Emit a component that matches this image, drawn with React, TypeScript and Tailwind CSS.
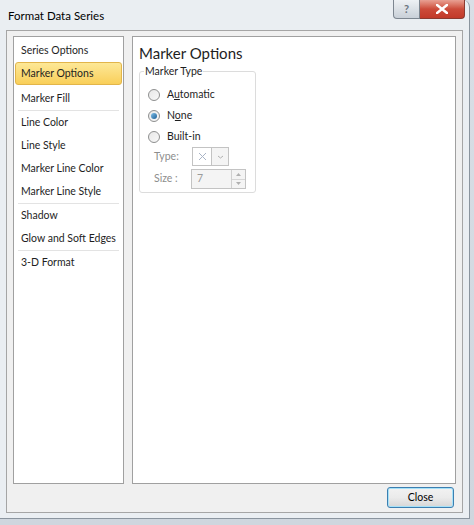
import React from "react";

const font = { fontFamily: 'Lato, "Noto Sans", sans-serif' };

type Item = { label: string; selected?: boolean; sepAfter?: boolean };

const items: Item[] = [
  { label: "Series Options" },
  { label: "Marker Options", selected: true },
  { label: "Marker Fill", sepAfter: true },
  { label: "Line Color" },
  { label: "Line Style" },
  { label: "Marker Line Color" },
  { label: "Marker Line Style", sepAfter: true },
  { label: "Shadow" },
  { label: "Glow and Soft Edges", sepAfter: true },
  { label: "3-D Format" },
];

function Radio({ checked }: { checked?: boolean }) {
  return (
    <span className="w-[12px] h-[12px] rounded-full border border-[#8e8f8f] bg-gradient-to-br from-[#e8e8e8] to-[#f8f8f8] flex items-center justify-center shrink-0">
      {checked && (
        <span className="w-[6px] h-[6px] rounded-full bg-gradient-to-br from-[#7fc0ea] to-[#1b5f95]" />
      )}
    </span>
  );
}

export default function App() {
  return (
    <div
      className="w-[474px] h-[525px] overflow-hidden bg-gradient-to-b from-[#d9dfe6] to-[#cfd6de] text-[#1e1e1e]"
      style={font}
    >
      <div className="w-[470px] h-[519px] bg-[#eaeef2] border-r border-b border-[#8a949e] rounded-tr-[7px] flex flex-col">
        {/* title bar */}
        <div className="h-[30px] flex items-start shrink-0">
          <div className="pl-[8px] pt-[7px] text-[11.5px] text-black">Format Data Series</div>
          <div className="ml-auto mr-[4px] flex">
            <div className="w-[27px] h-[19px] border border-[#7d8690] border-t-0 rounded-bl-[4px] bg-gradient-to-b from-[#eef1f4] to-[#c9d0d8] flex items-center justify-center text-[11px] font-bold text-[#6a7480]">
              ?
            </div>
            <div className="w-[45px] h-[19px] border border-[#8b3a30] border-t-0 border-l-0 rounded-br-[4px] bg-gradient-to-b from-[#e8a093] via-[#cc4b3a] to-[#c23a2a] flex items-center justify-center">
              <svg width="12" height="10" viewBox="0 0 12 10">
                <path d="M1 1 L11 9 M11 1 L1 9" stroke="#fff" strokeWidth="2.6" strokeLinecap="square" />
              </svg>
            </div>
          </div>
        </div>

        {/* client */}
        <div className="mx-[6px] h-[483px] border border-[#a5a5a5] bg-[#f0f0f0] flex flex-col px-[6px] pt-[5px]">
          <div className="flex gap-[8px] h-[448px]">
            {/* nav list */}
            <div className="w-[111px] border border-[#a0a0a0] bg-white pt-[2px] px-[1px] text-[10.5px] whitespace-nowrap">
              {items.map((it) => (
                <div key={it.label}>
                  <div
                    className={
                      it.selected
                        ? "h-[23px] flex items-center pl-[5px] rounded-[3px] border border-[#e2b54a] bg-gradient-to-b from-[#fde896] to-[#f9cf58] mb-[2px]"
                        : "h-[23px] flex items-center pl-[6px]"
                    }
                  >
                    {it.label}
                  </div>
                  {it.sepAfter && <div className="h-[1px] bg-[#e3e3e3] mx-[3px]" />}
                </div>
              ))}
            </div>

            {/* content */}
            <div className="flex-1 border border-[#a0a0a0] bg-white pl-[6px] pt-[6px]">
              <div className="text-[15px] leading-[20px] text-[#1e1e1e]">Marker Options</div>
              <div className="relative mt-[8px] w-[117px] h-[122px] border border-[#dcdcdc] rounded-[3px] text-[10.5px]">
                <div className="absolute -top-[8px] left-[4px] bg-white px-[1px] leading-[14px]">Marker Type</div>
                <div className="pt-[16px] pl-[8px] flex flex-col gap-[7px]">
                  <div className="flex items-center gap-[7px] h-[14px]">
                    <Radio />
                    <span>
                      A<span className="underline">u</span>tomatic
                    </span>
                  </div>
                  <div className="flex items-center gap-[7px] h-[14px]">
                    <Radio checked />
                    <span>
                      N<span className="underline">o</span>ne
                    </span>
                  </div>
                  <div className="flex items-center gap-[7px] h-[14px]">
                    <Radio />
                    <span>Built-in</span>
                  </div>
                </div>
                <div className="pl-[14px] mt-[3px] flex flex-col gap-[3px] text-[#8d8d8d]">
                  <div className="flex items-center h-[19px]">
                    <span className="w-[38px]">Type:</span>
                    <div className="flex h-[19px] border border-[#c3c3c3]">
                      <div className="w-[18px] flex items-center justify-center">
                        <svg width="9" height="9" viewBox="0 0 9 9">
                          <path d="M1 1 L8 8 M8 1 L1 8" stroke="#a9b4c6" strokeWidth="1" />
                        </svg>
                      </div>
                      <div className="w-[17px] border-l border-[#c3c3c3] bg-[#f4f4f4] flex items-center justify-center">
                        <svg width="7" height="4" viewBox="0 0 7 4">
                          <path d="M1 1 L3.5 3 L6 1" stroke="#b0b0b0" fill="none" />
                        </svg>
                      </div>
                    </div>
                  </div>
                  <div className="flex items-center h-[20px]">
                    <span className="w-[37px]">Size :</span>
                    <div className="flex h-[20px] w-[55px] border border-[#c3c3c3] bg-[#f4f4f4]">
                      <div className="flex-1 pl-[5px] flex items-center text-[#9a9a9a]">7</div>
                      <div className="w-[14px] border-l border-[#d0d0d0] flex flex-col">
                        <div className="flex-1 flex items-center justify-center border-b border-[#d6d6d6]">
                          <svg width="5" height="3" viewBox="0 0 5 3">
                            <path d="M0 3 L2.5 0 L5 3 Z" fill="#b0b0b0" />
                          </svg>
                        </div>
                        <div className="flex-1 flex items-center justify-center">
                          <svg width="5" height="3" viewBox="0 0 5 3">
                            <path d="M0 0 L2.5 3 L5 0 Z" fill="#b0b0b0" />
                          </svg>
                        </div>
                      </div>
                    </div>
                  </div>
                </div>
              </div>
            </div>
          </div>

          <div className="flex justify-end mt-[3px] pr-[2px]">
            <div className="w-[67px] h-[21px] rounded-[3px] border border-[#3c7fb1] shadow-[inset_0_0_0_1px_#a6e1f8] bg-gradient-to-b from-[#f2f2f2] via-[#ebebeb] to-[#d6d6d6] flex items-center justify-center text-[10.5px] text-black">
              Close
            </div>
          </div>
        </div>
      </div>
    </div>
  );
}
